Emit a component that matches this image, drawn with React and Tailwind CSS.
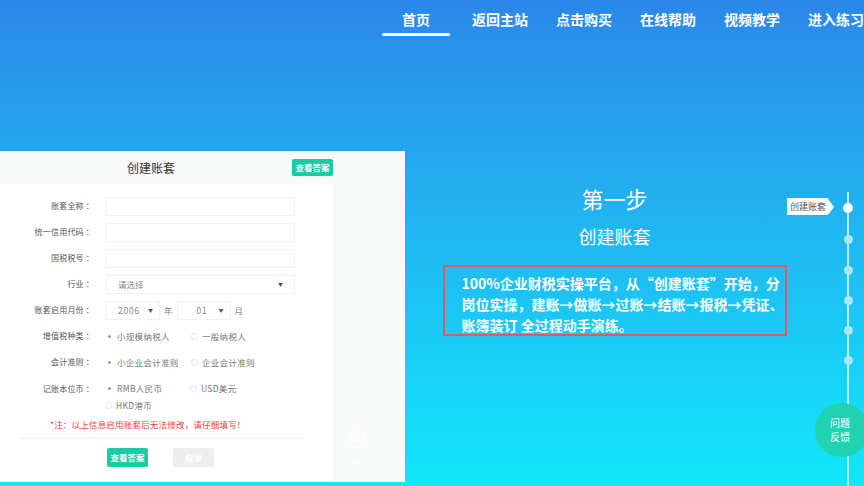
import React from "react";

const font = { fontFamily: '"Noto Sans CJK SC", "Noto Sans", sans-serif' };

function Radio({ checked, children, className = "" }) {
  return (
    <div className={"flex items-center " + className}>
      {checked ? (
        <span className="w-[8px] flex justify-center">
          <span className="w-[3px] h-[3px] rounded-full bg-[#999]"></span>
        </span>
      ) : (
        <span className="w-[7px] h-[7px] rounded-full border border-[#e6e6e6] bg-white"></span>
      )}
      <span className="ml-[4px] text-[8.5px] text-[#777] tracking-[0.3px]">{children}</span>
    </div>
  );
}

function Label({ children }) {
  return (
    <div className="w-[94px] text-right text-[8px] text-[#555] whitespace-nowrap tracking-[0.2px]">
      {children}&nbsp;：
    </div>
  );
}

function InputRow({ label }) {
  return (
    <div className="h-[26px] flex items-center">
      <Label>{label}</Label>
      <div className="ml-[12px] w-[189px] h-[19px] border border-[#f0f0f0] bg-white"></div>
    </div>
  );
}

export default function App() {
  const nav = ["首页", "返回主站", "点击购买", "在线帮助", "视频教学", "进入练习"];
  return (
    <div
      className="relative w-[864px] h-[486px] overflow-hidden bg-linear-to-b from-[#2b88e8] to-[#10e8f9] flex flex-col"
      style={font}
    >
      {/* nav */}
      <div className="h-[40px] flex pl-[374px] shrink-0">
        {nav.map((n, i) => (
          <div key={n} className="w-[84px] shrink-0 relative flex justify-center">
            <span className="mt-[9px] text-[14px] leading-[20px] font-semibold text-white whitespace-nowrap">{n}</span>
            {i === 0 && (
              <span className="absolute left-[8px] right-[8px] top-[33px] h-[3px] rounded-full bg-white"></span>
            )}
          </div>
        ))}
      </div>

      <div className="flex mt-[111px]">
        {/* panel */}
        <div className="w-[405px] h-[331px] bg-[#f8f9f9] flex flex-col shrink-0 relative">
          <div className="h-[33px] flex items-center w-[333px]">
            <div className="w-[292px] pl-[10px] text-center text-[12px] text-[#333]">创建账套</div>
            <div className="ml-auto w-[41px] h-[17px] rounded-[2px] bg-[#1ccba6] text-white text-[8.5px] font-bold flex items-center justify-center">
              查看答案
            </div>
          </div>
          <div className="flex-1 flex">
            <div className="w-[333px] bg-white flex flex-col pt-[9px]">
              <InputRow label="账套全称" />
              <InputRow label="统一信用代码" />
              <InputRow label="国税税号" />
              <div className="h-[26px] flex items-center">
                <Label>行业</Label>
                <div className="ml-[12px] w-[189px] h-[19px] border border-[#f0f0f0] bg-white flex items-center px-[11px] text-[8.5px] text-[#888]">
                  <span>请选择</span>
                  <span className="ml-auto text-[5px] text-[#555]">▼</span>
                </div>
              </div>
              <div className="h-[26px] flex items-center">
                <Label>账套启用月份</Label>
                <div className="ml-[12px] w-[54px] h-[19px] border border-[#f0f0f0] bg-white flex items-center pl-[11px] pr-[6px] text-[8.5px] text-[#888]">
                  <span className="tracking-[0.8px]">2006</span>
                  <span className="ml-auto text-[5px] text-[#555]">▼</span>
                </div>
                <span className="ml-[4px] text-[8.5px] text-[#888]">年</span>
                <div className="ml-[4px] w-[54px] h-[19px] border border-[#f0f0f0] bg-white flex items-center pl-[19px] pr-[6px] text-[8.5px] text-[#888]">
                  <span className="tracking-[0.8px]">01</span>
                  <span className="ml-auto text-[5px] text-[#555]">▼</span>
                </div>
                <span className="ml-[4px] text-[8.5px] text-[#888]">月</span>
              </div>
              <div className="h-[26px] flex items-center">
                <Label>增值税种类</Label>
                <div className="ml-[11px] w-[86px]"><Radio checked>小规模纳税人</Radio></div>
                <Radio>一般纳税人</Radio>
              </div>
              <div className="h-[26px] flex items-center">
                <Label>会计准则</Label>
                <div className="ml-[11px] w-[86px]"><Radio checked>小企业会计准则</Radio></div>
                <Radio>企业会计准则</Radio>
              </div>
              <div className="flex pt-[5px]">
                <div className="h-[17px] flex items-center"><Label>记账本位币</Label></div>
                <div className="ml-[11px] w-[170px] grid grid-cols-2">
                  <div className="h-[17px] flex items-center"><Radio checked>RMB人民币</Radio></div>
                  <div className="h-[17px] flex items-center"><Radio>USD美元</Radio></div>
                  <div className="h-[17px] flex items-center"><Radio>HKD港币</Radio></div>
                </div>
              </div>
              <div className="mt-[4px] h-[12px] flex items-center pl-[50px] text-[8.5px] text-[#f03c3c] tracking-[0.2px] whitespace-nowrap">
                *注：以上信息启用账套后无法修改，请仔细填写！
              </div>
              <div className="mt-[8px] ml-[20px] w-[283px] h-px bg-[#efefef]"></div>
              <div className="mt-[9px] flex">
                <div className="ml-[107px] w-[41px] h-[19px] rounded-[2px] bg-[#1ccba6] text-white text-[8.5px] font-bold flex items-center justify-center">
                  查看答案
                </div>
                <div className="ml-[25px] w-[41px] h-[19px] rounded-[2px] bg-[#eeeeee] text-white text-[8.5px] font-bold flex items-center justify-center">
                  取消
                </div>
              </div>
            </div>
            <div className="flex-1 flex justify-center pt-[240px]">
              <svg width="20" height="44" viewBox="0 0 20 44" className="-ml-[24px] opacity-60" fill="none" stroke="#ffffff" strokeWidth="1.5">
                <path d="M10 2 C5 2 3 6 3 10 L3 18 C3 22 6 24 10 24 C14 24 17 22 17 18 L17 10 C17 6 15 2 10 2 Z" />
                <path d="M8 12 L8 18 M12 12 L12 18" />
                <circle cx="10" cy="38" r="3" fill="#ffffff" />
              </svg>
            </div>
          </div>
        </div>

        {/* right column */}
        <div className="w-[419px] flex flex-col items-center text-white">
          <div className="mt-[32px] text-[22px] leading-[30px]">第一步</div>
          <div className="mt-[11px] text-[18px] leading-[24px]">创建账套</div>
          <div className="mt-[17px] w-[344px] h-[71px] border-2 border-[#e05b5b] pl-[17px] pt-[6px]">
            <div className="text-[14px] leading-[21px] font-bold whitespace-nowrap">
              100%企业财税实操平台，从“创建账套”开始，分
              <br />
              岗位实操，建账→做账→过账→结账→报税→凭证、
              <br />
              账簿装订 全过程动手演练。
            </div>
          </div>
        </div>
      </div>

      {/* timeline */}
      <div className="absolute left-[847px] top-[192px] bottom-0 w-[2px] bg-white/70"></div>
      {[239, 270, 300, 330, 360].map((y) => (
        <div
          key={y}
          className="absolute w-[9px] h-[9px] rounded-full bg-[#aee6f8]"
          style={{ left: 843.5, top: y - 4.5 }}
        ></div>
      ))}
      <div className="absolute left-[843px] top-[203px] w-[10px] h-[10px] rounded-full bg-white"></div>
      <div className="absolute left-[787px] top-[198px] h-[17px] flex items-center">
        <div className="h-[17px] bg-white pl-[3px] pr-[2px] flex items-center text-[9px] text-[#555]">创建账套</div>
        <div className="w-0 h-0 border-y-[8.5px] border-y-transparent border-l-[6px] border-l-white"></div>
      </div>

      {/* feedback */}
      <div className="absolute left-[815px] top-[403px] w-[54px] h-[54px] rounded-full bg-[#1fd3b2] flex items-center justify-center pr-[4px]">
        <span className="text-white text-[10px] leading-[14.5px] text-center">
          问题
          <br />
          反馈
        </span>
      </div>
    </div>
  );
}
